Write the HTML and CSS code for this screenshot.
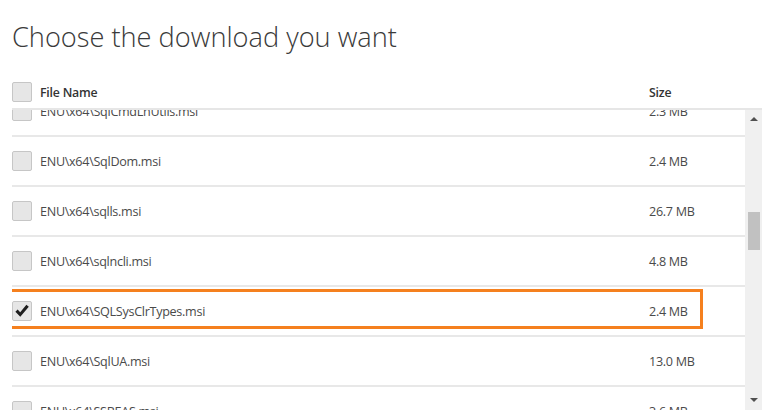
FILE: index.html
```html
<!DOCTYPE html>
<html>
<head>
<meta charset="utf-8">
<link rel="stylesheet" href="styles.css">
</head>
<body>
<div class="page">
  <h1 class="title">Choose the download you want</h1>
  <div class="table">
    <div class="head">
      <span class="cb"></span>
      <span class="name">File Name</span>
      <span class="size">Size</span>
    </div>
    <div class="body">
      <div class="viewport">
        <div class="rows">
          <div class="row"><span class="cb"></span><span class="name">ENU\x64\SqlCmdLnUtils.msi</span><span class="size">2.3 MB</span></div>
          <div class="row"><span class="cb"></span><span class="name">ENU\x64\SqlDom.msi</span><span class="size">2.4 MB</span></div>
          <div class="row"><span class="cb"></span><span class="name">ENU\x64\sqlls.msi</span><span class="size">26.7 MB</span></div>
          <div class="row"><span class="cb"></span><span class="name">ENU\x64\sqlncli.msi</span><span class="size">4.8 MB</span></div>
          <div class="row selected"><span class="cb checked"><svg viewBox="0 0 16 16" width="16" height="16"><path d="M1.4 8.8 L3.6 6.6 L6.2 9.2 L12.4 1.8 L14.8 3.8 L6.3 13.8 Z" fill="#1e1e1e"/></svg></span><span class="name">ENU\x64\SQLSysClrTypes.msi</span><span class="size">2.4 MB</span><span class="highlight"></span></div>
          <div class="row"><span class="cb"></span><span class="name">ENU\x64\SqlUA.msi</span><span class="size">13.0 MB</span></div>
          <div class="row"><span class="cb"></span><span class="name">ENU\x64\SSBEAS.msi</span><span class="size">3.6 MB</span></div>
        </div>
      </div>
      <div class="scrollbar">
        <span class="arrow up"></span>
        <div class="track"><span class="thumb"></span></div>
        <span class="arrow down"></span>
      </div>
    </div>
  </div>
</div>
</body>
</html>
```
FILE: styles.css
```css
html, body {
  margin: 0;
  padding: 0;
  background: #fff;
}
body {
  font-family: "Open Sans", "Noto Sans", "Liberation Sans", sans-serif;
  color: #4a4a4a;
  width: 768px;
  height: 418px;
  overflow: hidden;
}
.page {
  padding: 0 6px 0 12px;
}
.title {
  margin: 0;
  padding-top: 18px;
  height: 76px;
  box-sizing: border-box;
  font-size: 27.2px;
  font-weight: 300;
  line-height: 38px;
  color: #3a3a3a;
}
.head {
  display: flex;
  align-items: center;
  height: 32px;
  border-bottom: 2px solid #e6e6e6;
  font-size: 12.3px;
  font-weight: 600;
  letter-spacing: -0.2px;
  color: #333;
}
.cb {
  flex: none;
  width: 18px;
  height: 18px;
  border: 1px solid #c6c6c6;
  border-radius: 2px;
  background: #e6e6e6;
  display: flex;
  align-items: center;
  justify-content: center;
}
.cb svg {
  display: block;
}
.name {
  margin-left: 8px;
  width: 609px;
}
.size {
  flex: none;
}
.body {
  display: flex;
  height: 300px;
}
.viewport {
  flex: 1;
  overflow: hidden;
}
.rows {
  margin-top: -23px;
}
.row {
  position: relative;
  display: flex;
  align-items: center;
  height: 48px;
  border-bottom: 2px solid #e8e8e8;
  font-size: 12.6px;
  letter-spacing: -0.3px;
}
.highlight {
  position: absolute;
  left: -3px;
  top: 2px;
  width: 688px;
  height: 34px;
  border: 3px solid #f5801e;
}
.scrollbar {
  flex: none;
  width: 17px;
  background: #f0f0f0;
  display: flex;
  flex-direction: column;
  align-items: center;
}
.arrow {
  flex: none;
  width: 0;
  height: 0;
  border-left: 4px solid transparent;
  border-right: 4px solid transparent;
}
.arrow.up {
  margin-top: 7px;
  border-bottom: 4px solid #505050;
}
.arrow.down {
  margin-bottom: 8px;
  border-top: 4px solid #505050;
}
.track {
  flex: 1;
  width: 100%;
  display: flex;
  justify-content: center;
  padding-top: 91px;
  box-sizing: border-box;
}
.thumb {
  width: 12px;
  height: 38px;
  background: #c1c1c1;
}
```
